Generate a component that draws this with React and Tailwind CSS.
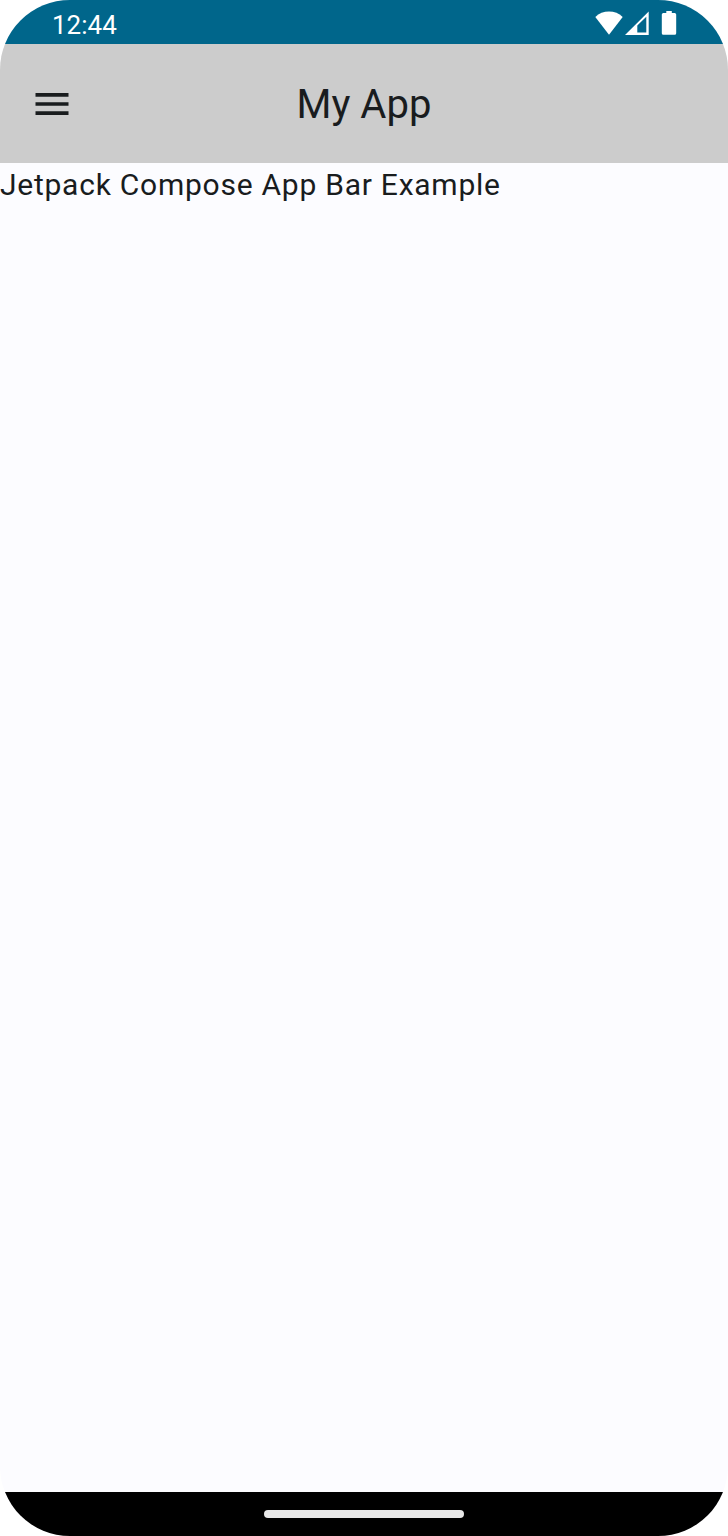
import React from 'react';

function WifiIcon() {
  return (
    <svg className="w-7 h-6" viewBox="0 0 28 24" fill="currentColor" aria-hidden="true">
      <path d="M14 23.7 0.3 6C4 2.4 8.8 0.6 14 0.6S24 2.4 27.7 6Z" />
    </svg>
  );
}

function SignalIcon() {
  return (
    <svg className="w-6 h-6" viewBox="0 0 24 24" fill="currentColor" aria-hidden="true">
      <path fillRule="evenodd" d="M0 24 23.7 0.5V24ZM12.3 21.6H21.3V5.8L12.3 14.6Z" />
    </svg>
  );
}

function BatteryIcon() {
  return (
    <svg className="w-4 h-6" viewBox="0 0 16 24" fill="currentColor" aria-hidden="true">
      <path d="M5.3 0H10.8V2H13.6Q15.2 2 15.2 3.6V22.2Q15.2 23.8 13.6 23.8H2.4Q0.8 23.8 0.8 22.2V3.6Q0.8 2 2.4 2H5.3Z" />
    </svg>
  );
}

function StatusBar() {
  return (
    <div className="h-11 pt-0.5 pl-[52px] pr-[51px] flex items-center justify-between bg-[#00668b] text-white">
      <span className="text-[26px] leading-8 pt-1">12:44</span>
      <div className="flex items-center">
        <WifiIcon />
        <div className="flex items-center gap-3 ml-0.5">
          <SignalIcon />
          <BatteryIcon />
        </div>
      </div>
    </div>
  );
}

function TopAppBar({ title }) {
  return (
    <header className="h-[119px] px-[30px] grid grid-cols-[44px_1fr_44px] items-center bg-[#cccccc]">
      <button type="button" aria-label="Open menu" className="w-11 h-11 flex items-center justify-center">
        <svg className="w-11 h-11" viewBox="0 0 24 24" fill="currentColor" aria-hidden="true">
          <path d="M3 18h18v-2H3v2zm0-5h18v-2H3v2zm0-7v2h18V6H3z" />
        </svg>
      </button>
      <h1 className="text-[40px] leading-[52px] pt-0.5 text-center">{title}</h1>
    </header>
  );
}

function NavigationBar() {
  return (
    <div className="h-11 flex items-center justify-center bg-black">
      <div className="w-[200px] h-2 rounded-full bg-[#e8e8e8]" />
    </div>
  );
}

export default function App() {
  return (
    <div className="min-h-screen bg-white flex">
      <div className="flex-1 flex flex-col overflow-hidden rounded-[70px] bg-[#fcfcff] font-['Roboto',sans-serif] text-[#191c1e]">
        <StatusBar />
        <TopAppBar title="My App" />
        <main className="flex-1">
          <p className="text-[30px] leading-11 tracking-wide">Jetpack Compose App Bar Example</p>
        </main>
        <NavigationBar />
      </div>
    </div>
  );
}
